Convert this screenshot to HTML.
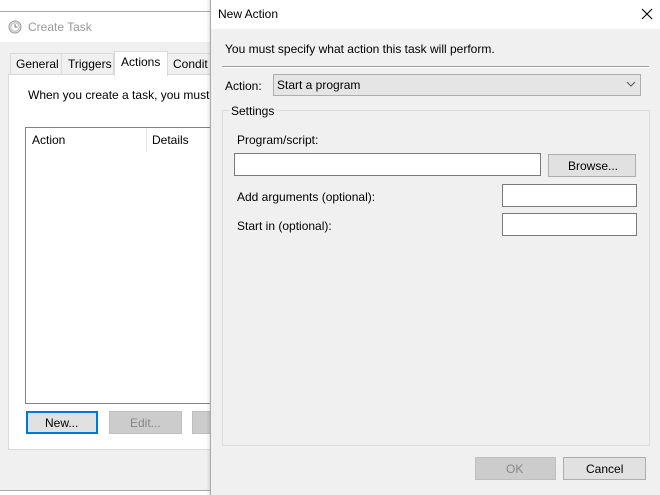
<!DOCTYPE html>
<html><head><meta charset="utf-8"><style>
*{margin:0;padding:0;box-sizing:border-box}
body{width:660px;height:495px;background:#fff;position:relative;overflow:hidden;font-family:"Liberation Sans",sans-serif;font-size:12px;color:#000}
.a{position:absolute}
.t{position:absolute;white-space:nowrap;line-height:14px}
</style></head><body>
<!-- left window -->
<div class="a" style="left:0;top:11px;width:214px;height:480px;background:#f0f0f0;border-top:1px solid #aaa;border-bottom:1px solid #aaa"></div>
<div class="a" style="left:0;top:12px;width:214px;height:30px;background:#fff"></div>
<svg class="a" style="left:8px;top:20px" width="14" height="14" viewBox="0 0 14 14"><circle cx="7" cy="7" r="6" fill="#eee" stroke="#999"/><circle cx="7" cy="7" r="4.2" fill="#fff" stroke="#bbb"/><path d="M7 4v3h2.5" stroke="#777" fill="none"/></svg>
<div class="t" style="left:28px;top:20px;color:#999">Create Task</div>
<div class="a" style="left:8px;top:74px;width:206px;height:376px;background:#fff;border:1px solid #d9d9d9"></div>
<div class="a" style="left:10px;top:53px;width:52px;height:22px;background:#f0f0f0;border:1px solid #d9d9d9"></div>
<div class="t" style="left:16px;top:57px">General</div>
<div class="a" style="left:61px;top:53px;width:53px;height:22px;background:#f0f0f0;border:1px solid #d9d9d9"></div>
<div class="t" style="left:68px;top:57px">Triggers</div>
<div class="a" style="left:114px;top:51px;width:54px;height:25px;background:#fff;border:1px solid #d9d9d9;border-bottom:none"></div>
<div class="t" style="left:121px;top:55px">Actions</div>
<div class="a" style="left:167px;top:53px;width:50px;height:22px;background:#f0f0f0;border:1px solid #d9d9d9"></div>
<div class="t" style="left:173px;top:57px">Condit</div>
<div class="t" style="left:28px;top:88px">When you create a task, you must</div>
<div class="a" style="left:25px;top:127px;width:190px;height:277px;background:#fff;border:1px solid #828282"></div>
<div class="a" style="left:146px;top:128px;width:1px;height:24px;background:#e5e5e5"></div>
<div class="t" style="left:32px;top:133px">Action</div>
<div class="t" style="left:152px;top:133px">Details</div>
<div class="a" style="left:26px;top:411px;width:72px;height:23px;background:#e1e1e1;border:2px solid #0078d7"></div>
<div class="t" style="left:45px;top:416px">New...</div>
<div class="a" style="left:109px;top:411px;width:73px;height:23px;background:#ccc;border:1px solid #bfbfbf"></div>
<div class="t" style="left:130px;top:416px;color:#888">Edit...</div>
<div class="a" style="left:192px;top:411px;width:30px;height:23px;background:#ccc;border:1px solid #bfbfbf"></div>
<!-- right dialog -->
<div class="a" style="left:206px;top:0;width:6px;height:495px;background:linear-gradient(to right,rgba(0,0,0,0),rgba(0,0,0,.15))"></div>
<div class="a" style="left:210px;top:0;width:450px;height:495px;background:#f0f0f0;border-left:1px solid #aaa"></div>
<div class="a" style="left:211px;top:0;width:449px;height:29px;background:#fff"></div>
<div class="t" style="left:218px;top:7px">New Action</div>
<svg class="a" style="left:641px;top:8px" width="12" height="12"><path d="M1 1L11 11M11 1L1 11" stroke="#000" stroke-width="1.1"/></svg>
<div class="t" style="left:225px;top:42px">You must specify what action this task will perform.</div>
<div class="a" style="left:222px;top:66px;width:427px;height:2px;border-top:1px solid #a0a0a0;border-bottom:1px solid #fff"></div>
<div class="t" style="left:225px;top:79px">Action:</div>
<div class="a" style="left:273px;top:74px;width:368px;height:22px;background:#e5e5e5;border:1px solid #adadad"></div>
<div class="t" style="left:277px;top:78px">Start a program</div>
<svg class="a" style="left:626px;top:81px" width="10" height="6"><path d="M1 1L5 5L9 1" stroke="#555" fill="none"/></svg>
<div class="a" style="left:222px;top:110px;width:428px;height:336px;border:1px solid #dcdcdc"></div>
<div class="t" style="left:229px;top:104px;background:#f0f0f0;padding:0 2px">Settings</div>
<div class="t" style="left:237px;top:133px">Program/script:</div>
<div class="a" style="left:234px;top:153px;width:307px;height:23px;background:#fff;border:1px solid #7a7a7a"></div>
<div class="a" style="left:548px;top:154px;width:88px;height:23px;background:#e1e1e1;border:1px solid #adadad"></div>
<div class="t" style="left:568px;top:159px">Browse...</div>
<div class="t" style="left:237px;top:190px">Add arguments (optional):</div>
<div class="a" style="left:502px;top:184px;width:135px;height:23px;background:#fff;border:1px solid #7a7a7a"></div>
<div class="t" style="left:237px;top:219px">Start in (optional):</div>
<div class="a" style="left:502px;top:213px;width:135px;height:23px;background:#fff;border:1px solid #7a7a7a"></div>
<div class="a" style="left:475px;top:457px;width:81px;height:23px;background:#ccc;border:1px solid #bfbfbf"></div>
<div class="t" style="left:506px;top:462px;color:#888">OK</div>
<div class="a" style="left:563px;top:457px;width:83px;height:23px;background:#e1e1e1;border:1px solid #adadad"></div>
<div class="t" style="left:586px;top:462px">Cancel</div>
</body></html>
